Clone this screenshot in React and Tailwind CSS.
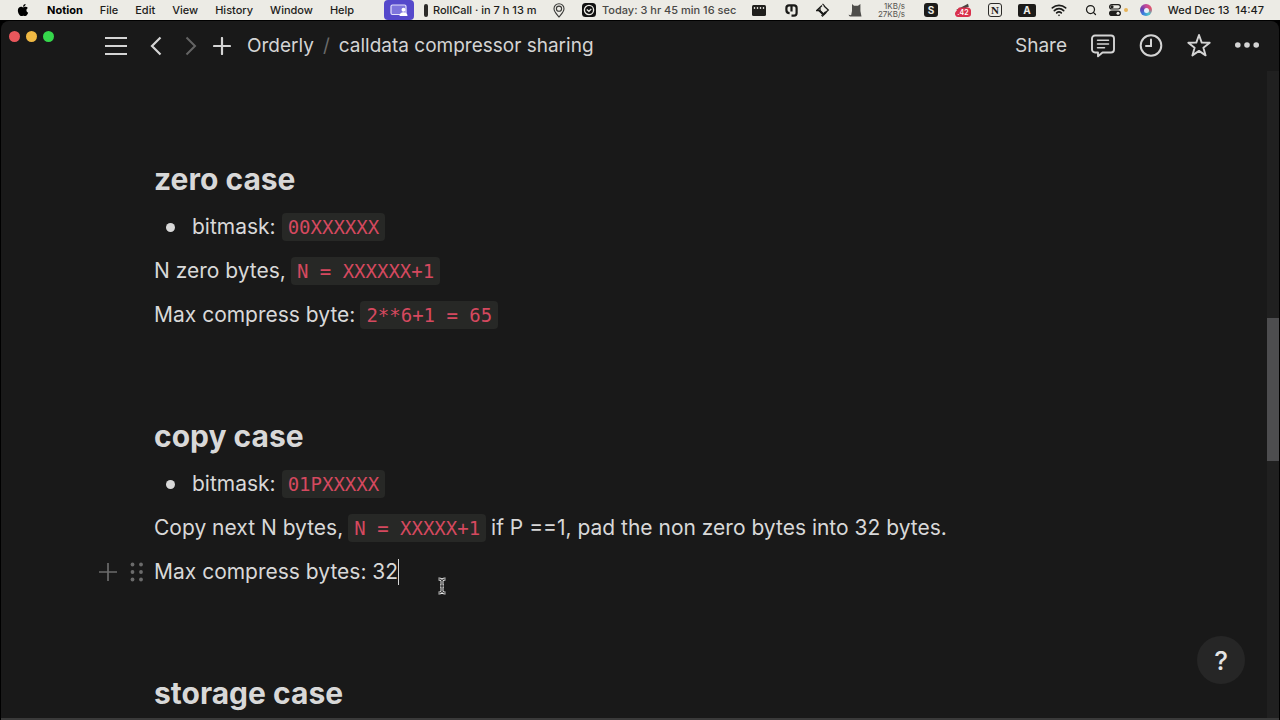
import React from 'react';
import { FaApple } from 'react-icons/fa';
import { Wifi, Search } from 'lucide-react';

const menus = ['File', 'Edit', 'View', 'History', 'Window', 'Help'];

function TraySlot({ label, children }) {
    return (
        <button type="button" aria-label={label} className="flex h-5 w-8 shrink-0 items-center justify-center">
            {children}
        </button>
    );
}

function MenuBar() {
    return (
        <header className="flex h-5 shrink-0 items-center justify-between overflow-hidden bg-[#ecebe5] pr-4 pl-4 text-[11px] font-medium whitespace-nowrap text-[#1c1c1a]">
            <nav className="flex items-center gap-[17px]">
                <button type="button" aria-label="Apple menu" className="text-black">
                    <FaApple size={14} />
                </button>
                <button type="button" className="font-bold text-black">Notion</button>
                {menus.map(name => (
                    <button type="button" key={name}>{name}</button>
                ))}
            </nav>

            <div className="flex shrink-0 items-center">
                <button type="button" aria-label="Screen sharing" className="flex h-5 w-[30px] shrink-0 items-center justify-center rounded-sm bg-[#5549cb]">
                    <svg width="18" height="12" viewBox="0 0 18 12">
                        <rect x="1" y="1" width="15" height="9.5" rx="1.5" fill="#7d74dc" stroke="#e3e0fa" strokeWidth="1.2" />
                        <circle cx="13.5" cy="5.8" r="2" fill="#fff" />
                        <path d="M9.5 12c0-2.6 1.6-3.8 4-3.8s4 1.2 4 3.8z" fill="#fff" />
                    </svg>
                </button>

                <button type="button" className="ml-[10px] flex w-[122px] shrink-0 items-center gap-[5px]">
                    <span className="h-[13px] w-1 shrink-0 rounded-sm bg-[#2c2b29]" />
                    RollCall · in 7 h 13 m
                </button>

                <button type="button" aria-label="Location" className="flex w-[26px] shrink-0 justify-center">
                    <svg width="12" height="15" viewBox="0 0 12 15" fill="none" stroke="#3a3a38" strokeWidth="1.1">
                        <path d="M6 14C3.6 11 1 8.6 1 5.7a5 5 0 0 1 10 0C11 8.6 8.4 11 6 14z" />
                        <circle cx="6" cy="5.7" r="2.6" />
                    </svg>
                </button>

                <button type="button" className="flex w-[171px] shrink-0 items-center gap-[6px] pl-[10px] text-[#4a4946]">
                    <svg width="14" height="14" viewBox="0 0 14 14" className="shrink-0">
                        <rect width="14" height="14" rx="3.5" fill="#111" />
                        <circle cx="7" cy="7" r="4.6" fill="none" stroke="#ecebe5" strokeWidth="1.3" />
                        <path d="M4.8 6.4l2.1 1.9 2.4-2.3" fill="none" stroke="#ecebe5" strokeWidth="1.3" />
                    </svg>
                    Today: 3 hr 45 min 16 sec
                </button>

                <TraySlot label="Clips">
                    <svg width="14" height="11" viewBox="0 0 14 11">
                        <rect width="14" height="11" rx="1.5" fill="#1f1e1c" />
                        <path d="M2.5 2v2M5.5 2v2M8.5 2v2M11.5 2v2" stroke="#d6d4ce" strokeWidth="1.3" />
                    </svg>
                </TraySlot>
                <TraySlot label="Mosaic">
                    <svg width="13" height="13" viewBox="0 0 13 13" fill="none" stroke="#1a1a18" strokeWidth="2.2">
                        <path d="M4.6 9.2Q1.4 9.2 1.4 6V4Q1.4 1.4 4 1.4H9Q11.6 1.4 11.6 4V9Q11.6 11.6 9 11.6H6.5" />
                        <path d="M6.5 2V7.5" />
                    </svg>
                </TraySlot>
                <TraySlot label="Launcher">
                    <svg width="14" height="14" viewBox="0 0 14 14" fill="none" stroke="#1a1a18">
                        <path d="M8 3L12.3 7 7.500 11.500 3.300 7.500H.8L6 2.500" strokeWidth="1.300" />
                        <path d="M3.300 7.500L7.500 11.500 10 9" strokeWidth="2.200" />
                        <path d="M6.500 .8L8.500 2.800M5.500 12L7 13.500M4 7.500V5" strokeWidth="1.200" />
                    </svg>
                </TraySlot>
                <TraySlot label="Cat">
                    <svg width="14" height="14" viewBox="0 0 14 14" fill="#4e4d4a">
                        <path d="M4 1l2 1.7h4L12.4 1v7l1.1 5.5H3.2C1.5 13.5.5 12.6.8 11.4c.6.7 1.4 1 2.4.7L4 8z" />
                    </svg>
                </TraySlot>

                <div className="flex w-11 shrink-0 flex-col items-end pr-[10px] text-[8px] leading-[8px] font-normal text-[#55534f]">
                    <span>1KB/s</span>
                    <span>27KB/s</span>
                </div>

                <TraySlot label="Shortcuts">
                    <span className="flex h-[14px] w-[14px] items-center justify-center rounded-[3px] bg-[#1c1b19] text-[10px] font-bold text-[#ecebe5]">S</span>
                </TraySlot>
                <TraySlot label="Notifications">
                    <span className="relative flex h-[14px] w-4 items-end">
                        <svg width="16" height="14" viewBox="0 0 16 14" className="absolute inset-0">
                            <path d="M1 7L13 .8l.8 3L6 7z" fill="#4b4442" />
                            <path d="M4 4.5h8.5A3.3 3.3 0 0 1 16 8v2.5A3.3 3.3 0 0 1 12.7 14H3.5A3.3 3.3 0 0 1 .5 9z" fill="#d9304c" />
                        </svg>
                        <span className="relative w-full text-center text-[7px] leading-[9px] font-semibold text-white">.42</span>
                    </span>
                </TraySlot>
                <TraySlot label="Notion">
                    <span className="flex h-[14px] w-[14px] items-center justify-center rounded-[3px] border border-[#2b2a28] font-['Liberation_Serif',serif] text-[11px] font-bold">N</span>
                </TraySlot>
                <TraySlot label="Input source">
                    <span className="flex h-[13px] w-[18px] items-center justify-center rounded-[2px] bg-[#1c1b19] text-[10px] font-bold text-[#ecebe5]">A</span>
                </TraySlot>
                <TraySlot label="Wi-Fi"><Wifi size={16} strokeWidth={2.5} /></TraySlot>
                <TraySlot label="Search"><Search size={12} strokeWidth={2.5} /></TraySlot>
                <button type="button" aria-label="Control centre" className="flex w-6 shrink-0 items-center gap-[3px] pl-[2px]">
                    <svg width="12" height="12" viewBox="0 0 12 12">
                        <rect x=".6" y=".6" width="10.8" height="4.4" rx="2.2" fill="none" stroke="#1f1e1c" strokeWidth="1.2" />
                        <circle cx="3" cy="2.8" r="1.6" fill="#1f1e1c" />
                        <rect y="6.4" width="12" height="5.6" rx="2.8" fill="#1f1e1c" />
                        <circle cx="9" cy="9.2" r="1.5" fill="#ecebe5" />
                    </svg>
                    <span className="h-1 w-1 rounded-full bg-[#e8b45a]" />
                </button>
                <button type="button" aria-label="Siri" className="flex w-[30px] shrink-0 justify-center">
                    <span className="flex h-3 w-3 items-center justify-center rounded-full bg-[conic-gradient(#c64a9a,#e0526c,#4bc5c9,#3a7de0,#6b3fae,#c64a9a)]">
                        <span className="h-[5px] w-[5px] rounded-full bg-[#e6f0fa]" />
                    </span>
                </button>
                <time className="ml-1 w-[99px] text-right whitespace-pre">Wed Dec 13  14:47</time>
            </div>
        </header>
    );
}

function TopBar() {
    return (
        <div className="flex h-[50px] shrink-0 items-center justify-between pr-5 pl-2 text-[19px] whitespace-nowrap text-[#d4d4d4]">
            <div className="flex h-full items-center">
                <div className="mt-[10px] mr-12 flex gap-[6px] self-start">
                    <button type="button" aria-label="Close" className="h-[11px] w-[11px] rounded-full bg-[#e9575c]" />
                    <button type="button" aria-label="Minimize" className="h-[11px] w-[11px] rounded-full bg-[#efb843]" />
                    <button type="button" aria-label="Zoom" className="h-[11px] w-[11px] rounded-full bg-[#35d74b]" />
                </div>
                <button type="button" aria-label="Toggle sidebar" className="flex w-7 justify-center">
                    <svg width="24" height="20" viewBox="0 0 24 20" stroke="currentColor" strokeWidth="2">
                        <path d="M1 2h22M1 10h22M1 18h22" />
                    </svg>
                </button>
                <button type="button" aria-label="Back" className="ml-3 flex w-7 justify-center">
                    <svg width="12" height="20" viewBox="0 0 12 20" fill="none" stroke="currentColor" strokeWidth="2.2">
                        <path d="M10.5 1.5L2 10l8.5 8.5" />
                    </svg>
                </button>
                <button type="button" aria-label="Forward" className="ml-[7px] flex w-7 justify-center text-[#646464]">
                    <svg width="12" height="20" viewBox="0 0 12 20" fill="none" stroke="currentColor" strokeWidth="2">
                        <path d="M1.5 1.5L10 10l-8.5 8.5" />
                    </svg>
                </button>
                <button type="button" aria-label="New page" className="ml-[3px] flex w-7 justify-center">
                    <svg width="18" height="18" viewBox="0 0 18 18" stroke="currentColor" strokeWidth="2.2" strokeLinecap="round">
                        <path d="M9 1v16M1 9h16" />
                    </svg>
                </button>
                <nav aria-label="Breadcrumb" className="ml-[11px] flex items-center gap-[9px] pt-px">
                    <a href="#orderly">Orderly</a>
                    <span className="text-[#6a6a6a]">/</span>
                    <a href="#page">calldata compressor sharing</a>
                </nav>
            </div>

            <div className="flex items-center gap-6">
                <button type="button">Share</button>
                <button type="button" aria-label="Comments">
                    <svg width="24" height="24" viewBox="0 0 24 24" fill="none" stroke="currentColor" strokeWidth="1.9" strokeLinejoin="round" strokeLinecap="round">
                        <path d="M4 1.5h16a3 3 0 0 1 3 3v11a3 3 0 0 1-3 3h-8.5L7 22.3V18.5H4a3 3 0 0 1-3-3v-11a3 3 0 0 1 3-3z" />
                        <path d="M6.5 6.3h11M6.5 10h11M6.5 13.7h7" strokeWidth="1.5" />
                    </svg>
                </button>
                <button type="button" aria-label="Updates">
                    <svg width="24" height="24" viewBox="0 0 24 24" fill="none" stroke="currentColor" strokeWidth="2" strokeLinecap="round">
                        <circle cx="12" cy="11.5" r="10.3" />
                        <path d="M12 5.5V12H7" />
                    </svg>
                </button>
                <button type="button" aria-label="Favorite">
                    <svg width="24" height="24" viewBox="0 0 24 24" fill="none" stroke="currentColor" strokeWidth="1.9" strokeLinejoin="round">
                        <path d="M12 1l2.7 7.6 8 .2-6.3 4.900 2.200 7.700L12 16.900l-6.600 4.500 2.200-7.700L1.300 8.800l8-.2z" />
                    </svg>
                </button>
                <button type="button" aria-label="More">
                    <svg width="24" height="24" viewBox="0 0 24 24" fill="currentColor">
                        <circle cx="2.8" cy="11" r="2.8" />
                        <circle cx="12" cy="11" r="2.8" />
                        <circle cx="21.2" cy="11" r="2.8" />
                    </svg>
                </button>
            </div>
        </div>
    );
}

function Code({ children }) {
    return (
        <code className="rounded bg-[#272826] px-[6px] py-[3px] font-['DejaVu_Sans_Mono',monospace] text-[19px] leading-[22px] whitespace-pre text-[#d5495f]">
            {children}
        </code>
    );
}

function Heading({ children }) {
    return (
        <h2 className="flex h-[50px] items-center pb-0.5 pl-14 text-[30px] font-bold">{children}</h2>
    );
}

function Row({ gutter, children }) {
    return (
        <div className="flex h-11 items-center">
            <div className="flex w-14 shrink-0 items-center">{gutter}</div>
            <p className="flex items-center gap-[5px]">{children}</p>
        </div>
    );
}

function Bullet({ children }) {
    return (
        <ul className="pl-14">
            <li className="flex h-11 items-center gap-[6px]">
                <span className="mr-[11px] ml-3 h-[9px] w-[9px] rounded-full bg-[#d8d8d8]" />
                {children}
            </li>
        </ul>
    );
}

const handles = (
    <>
        <button type="button" aria-label="Add block" className="text-[#6b6b6b]">
            <svg width="20" height="20" viewBox="0 0 20 20" stroke="currentColor" strokeWidth="1.7">
                <path d="M10 1v18M1 10h18" />
            </svg>
        </button>
        <button type="button" aria-label="Drag block" className="ml-3 text-[#6b6b6b]">
            <svg width="14" height="20" viewBox="0 0 14 20" fill="currentColor">
                <circle cx="2.5" cy="2.5" r="1.9" />
                <circle cx="11" cy="2.5" r="1.9" />
                <circle cx="2.5" cy="10" r="1.9" />
                <circle cx="11" cy="10" r="1.9" />
                <circle cx="2.5" cy="17.5" r="1.9" />
                <circle cx="11" cy="17.5" r="1.9" />
            </svg>
        </button>
    </>
);

function App() {
    return (
        <div className="flex h-screen flex-col overflow-hidden bg-black font-['Inter',sans-serif]">
            <MenuBar />

            <div className="relative mx-px mt-px flex min-h-0 flex-1 flex-col rounded-t-lg border-b-2 border-[#3a3a3a] bg-[#191919]">
                <TopBar />

                <div className="flex min-h-0 flex-1">
                    <main className="min-w-0 flex-1 overflow-hidden pt-[84px] pl-[97px] text-[21px] whitespace-nowrap text-[#d8d8d8]">
                        <section className="mb-[75px]">
                            <Heading>zero case</Heading>
                            <Bullet>bitmask: <Code>00XXXXXX</Code></Bullet>
                            <Row>N zero bytes, <Code>N = XXXXXX+1</Code></Row>
                            <Row>Max compress byte: <Code>2**6+1 = 65</Code></Row>
                        </section>

                        <section className="mb-[75px]">
                            <Heading>copy case</Heading>
                            <Bullet>bitmask: <Code>01PXXXXX</Code></Bullet>
                            <Row>
                                Copy next N bytes, <Code>N = XXXXX+1</Code> if P ==1, pad the non zero bytes into 32 bytes.
                            </Row>
                            <Row gutter={handles}>
                                <span className="border-r border-[#d8d8d8] leading-[26px]">Max compress bytes: 32</span>
                            </Row>
                        </section>

                        <section>
                            <Heading>storage case</Heading>
                        </section>
                    </main>

                    {/* Scrollbar */}
                    <div className="flex w-3 shrink-0 flex-col bg-[#202020]">
                        <div className="grow-[247]" />
                        <div className="grow-[144] bg-[#4d4d4f]" />
                        <div className="grow-[257]" />
                    </div>
                </div>

                <button type="button" aria-label="Help" className="absolute right-[34px] bottom-[34px] flex h-12 w-12 items-center justify-center rounded-full bg-[#262626] text-[26px] font-medium text-[#e4e4e4]">
                    ?
                </button>

                {/* Text cursor */}
                <svg width="10" height="18" viewBox="0 0 10 18" fill="none" className="absolute top-[556px] left-[436px]">
                    <path d="M1.5 2C3.5 2 5 2.5 5 4v10c0 1.5-1.5 2-3.5 2M8.5 2C6.5 2 5 2.5 5 4M8.5 16C6.5 16 5 15.5 5 14M3 9h4" stroke="#e8e8e8" strokeWidth="3" />
                    <path d="M1.5 2C3.5 2 5 2.5 5 4v10c0 1.5-1.5 2-3.5 2M8.5 2C6.5 2 5 2.5 5 4M8.5 16C6.5 16 5 15.5 5 14M3 9h4" stroke="#191919" strokeWidth="1" />
                </svg>
            </div>
        </div>
    );
}

export default App;
